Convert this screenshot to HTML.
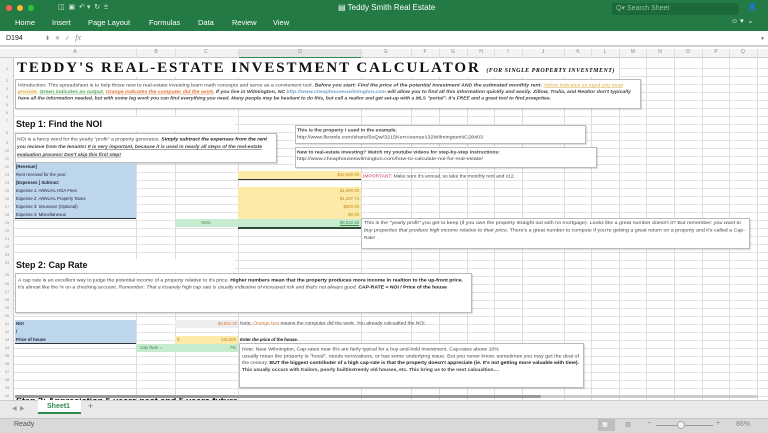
<!DOCTYPE html>
<html><head><meta charset="utf-8"><style>
*{margin:0;padding:0;box-sizing:border-box}
body{width:768px;height:433px;overflow:hidden;position:relative;background:#fff;font-family:"Liberation Sans",sans-serif}
.a{position:absolute}
.t{position:absolute;white-space:nowrap;font-size:4.3px;line-height:8px;color:#333}
.box{position:absolute;background:#fff;border:1px solid #bbb;box-shadow:1px 1px 1px rgba(0,0,0,.15)}
.hl{position:absolute;font-size:5px;color:#888;top:49px;width:20px;text-align:center}
svg text{font-family:"Liberation Sans",sans-serif;font-size:4.6px;fill:#444}
</style></head><body>
<div class="a" style="left:0;top:0;width:768px;height:31px;background:#237a45"></div>
<div class="a" style="left:6px;top:5px;width:6px;height:6px;border-radius:3px;background:#fc5f57"></div>
<div class="a" style="left:17px;top:5px;width:6px;height:6px;border-radius:3px;background:#fdbc2e"></div>
<div class="a" style="left:28px;top:5px;width:6px;height:6px;border-radius:3px;background:#29c840"></div>
<div class="t" style="left:58px;top:4px;font-size:7px;color:#d8eadf">◫ &nbsp;▣ &nbsp;↶ ▾ &nbsp;↻ &nbsp;⩧</div>
<div class="t" style="left:338px;top:4px;font-size:8px;color:#fff">▤ Teddy Smith Real Estate</div>
<div class="a" style="left:612px;top:3px;width:127px;height:12px;background:#1c6a3a;border-radius:2px"></div>
<div class="t" style="left:616px;top:5px;font-size:7px;color:#8fc2a2">Q▾ Search Sheet</div>
<div class="t" style="left:748px;top:4px;font-size:7px;color:#fff">👤</div>
<div class="t" style="left:731px;top:18px;font-size:7px;color:#fff">☺ ▾ &nbsp;⌄</div>
<div class="t" style="left:15px;top:19px;font-size:7.5px;color:#fff">Home</div>
<div class="t" style="left:52px;top:19px;font-size:7.5px;color:#fff">Insert</div>
<div class="t" style="left:88px;top:19px;font-size:7.5px;color:#fff">Page Layout</div>
<div class="t" style="left:149px;top:19px;font-size:7.5px;color:#fff">Formulas</div>
<div class="t" style="left:198px;top:19px;font-size:7.5px;color:#fff">Data</div>
<div class="t" style="left:232px;top:19px;font-size:7.5px;color:#fff">Review</div>
<div class="t" style="left:273px;top:19px;font-size:7.5px;color:#fff">View</div>
<div class="a" style="left:0;top:31px;width:768px;height:16px;background:#fff;border-bottom:2px solid #d0d0d0"></div>
<div class="t" style="left:6px;top:35px;font-size:7px;color:#222">D194</div>
<div class="t" style="left:45px;top:34px;font-size:6px;color:#888">⬍ &nbsp;&nbsp;✕ &nbsp;&nbsp;✓ &nbsp;&nbsp;<i style="font-family:'Liberation Serif';font-size:8px">fx</i></div>
<div class="t" style="left:760px;top:35px;font-size:5px;color:#777">▼</div>
<div class="a" style="left:0;top:49px;width:768px;height:9px;background:#f3f3f3;border-bottom:1px solid #ccc"></div>
<div class="a" style="left:238px;top:49px;width:123px;height:9px;background:#e4e4e4;border-bottom:1px solid #2f8a4f"></div>
<div class="a" style="left:0;top:58px;width:14px;height:342px;background:#f3f3f3;border-right:1px solid #ccc"></div>
<div class="a" style="left:14px;top:58px;width:754px;height:342px;background-image:repeating-linear-gradient(to bottom,transparent 0,transparent 7px,#e2e2e2 7px,#e2e2e2 8px);background-position:0 3px"></div>
<svg class="a" style="left:0;top:49px" width="768" height="351"><g stroke="#ddd" stroke-width="1">
<line x1="136.5" y1="0" x2="136.5" y2="351"/><line x1="175.5" y1="0" x2="175.5" y2="351"/><line x1="238.5" y1="0" x2="238.5" y2="351"/><line x1="361.5" y1="0" x2="361.5" y2="351"/><line x1="411.5" y1="0" x2="411.5" y2="351"/><line x1="439.5" y1="0" x2="439.5" y2="351"/><line x1="467.5" y1="0" x2="467.5" y2="351"/><line x1="494.5" y1="0" x2="494.5" y2="351"/><line x1="522.5" y1="0" x2="522.5" y2="351"/><line x1="564.5" y1="0" x2="564.5" y2="351"/><line x1="591.5" y1="0" x2="591.5" y2="351"/><line x1="619.5" y1="0" x2="619.5" y2="351"/><line x1="646.5" y1="0" x2="646.5" y2="351"/><line x1="674.5" y1="0" x2="674.5" y2="351"/><line x1="702.5" y1="0" x2="702.5" y2="351"/><line x1="729.5" y1="0" x2="729.5" y2="351"/><line x1="757.5" y1="0" x2="757.5" y2="351"/></g></svg>
<div class="hl" style="left:65px">A</div><div class="hl" style="left:146px">B</div><div class="hl" style="left:196px">C</div><div class="hl" style="left:290px">D</div><div class="hl" style="left:376px">E</div><div class="hl" style="left:415px">F</div><div class="hl" style="left:443px">G</div><div class="hl" style="left:471px">H</div><div class="hl" style="left:498px">I</div><div class="hl" style="left:533px">J</div><div class="hl" style="left:568px">K</div><div class="hl" style="left:595px">L</div><div class="hl" style="left:623px">M</div><div class="hl" style="left:650px">N</div><div class="hl" style="left:678px">O</div><div class="hl" style="left:706px">P</div><div class="hl" style="left:733px">Q</div>
<div class="a" style="left:0;top:58px;width:14px;font-size:4px;color:#999;text-align:center;line-height:8px">
<div style="height:19px;line-height:22px">1</div><div>2</div><div>3</div><div>4</div><div>5</div><div>6</div><div>7</div><div style="height:14px;line-height:16px">8</div><div>9</div><div>10</div><div>11</div><div>12</div><div>13</div><div>14</div><div>15</div><div>16</div><div>17</div><div>18</div><div>19</div><div>20</div><div>21</div><div>22</div><div>23</div><div>24</div><div style="height:13px;line-height:16px">25</div><div>26</div><div>27</div><div>28</div><div>29</div><div>30</div><div>31</div><div>32</div><div>33</div><div>34</div><div>35</div><div>36</div><div>37</div><div>38</div><div>39</div><div>40</div><div>41</div></div>
<div class="a" style="left:15px;top:58px;width:604px;height:19px;background:#fff"></div>
<div class="t" style="left:17px;top:61px;font-family:'Liberation Serif',serif;font-weight:bold;font-size:15px;line-height:15px;color:#111;letter-spacing:1.9px">TEDDY'S REAL-ESTATE INVESTMENT CALCULATOR <span style="font-size:6px;font-style:italic;letter-spacing:.5px">(FOR SINGLE PROPERTY INVESTMENT)</span></div>
<div class="box" style="left:15px;top:79px;width:626px;height:30px"></div>
<div class="a" style="left:15px;top:117px;width:220px;height:14px;background:#fff"></div>
<div class="t" style="left:16px;top:119px;font-size:9px;line-height:10px;font-weight:bold;color:#111">Step 1: Find the NOI</div>
<div class="box" style="left:15px;top:133px;width:262px;height:30px"></div>
<div class="box" style="left:295px;top:125px;width:291px;height:19px"></div>
<div class="box" style="left:295px;top:147px;width:302px;height:21px"></div>
<div class="a" style="left:15px;top:163px;width:121px;height:56px;background:#bed6ec;border-bottom:1px solid #333"></div>
<div class="t" style="left:16px;top:163px;font-size:4.3px;color:#223">
<b>[Revenue]</b><br>Rent received for the <i>year</i>:<br><b>[Expenses ] Subtract</b><br>Expense 1: ANNUAL HOA Fees<br>Expense 2: ANNUAL Property Taxes<br>Expense 3: Insurance (Optional)<br>Expense 4: Miscellaneous</div>
<div class="a" style="left:238px;top:171px;width:123px;height:9px;background:#fde9a8;border-bottom:1px solid #333"></div>
<div class="a" style="left:238px;top:187px;width:123px;height:32px;background:#fde9a8"></div>
<div class="t" style="left:238px;top:171px;width:121px;text-align:right;color:#c08a20">$12,600.00</div>
<div class="t" style="left:238px;top:187px;width:121px;text-align:right;color:#c08a20">$1,980.00<br>$1,287.74<br>$500.00<br>$0.00</div>
<div class="a" style="left:175px;top:219px;width:186px;height:8px;background:#c7ebcf"></div>
<div class="a" style="left:238px;top:227px;width:123px;height:2px;background:#2c4a35"></div>
<div class="t" style="left:175px;top:219px;width:63px;text-align:center;color:#3a8a4a">NOI=</div>
<div class="t" style="left:238px;top:219px;width:121px;text-align:right;color:#3a8a4a"><u>$8,832.26</u></div>
<div class="box" style="left:361px;top:218px;width:389px;height:31px"></div>
<div class="a" style="left:15px;top:259px;width:220px;height:13px;background:#fff"></div>
<div class="t" style="left:16px;top:260px;font-size:9px;line-height:10px;font-weight:bold;color:#111">Step 2: Cap Rate</div>
<div class="box" style="left:15px;top:273px;width:457px;height:40px"></div>
<div class="a" style="left:15px;top:320px;width:121px;height:24px;background:#bed6ec;border-bottom:1px solid #333"></div>
<div class="t" style="left:16px;top:320px;color:#223;font-weight:bold">NOI<br>/<br>Price of house</div>
<div class="a" style="left:175px;top:320px;width:63px;height:8px;background:#eee"></div>
<div class="t" style="left:175px;top:320px;width:62px;text-align:right;color:#e0743a">$8,832.26</div>
<div class="a" style="left:175px;top:336px;width:63px;height:8px;background:#fde9a8"></div>
<div class="t" style="left:177px;top:336px;width:59px;color:#c08a20">$<span style="float:right">118,000</span></div>
<div class="t" style="left:240px;top:336px;color:#222"><b><i>Enter the price of the house.</i></b></div>
<div class="a" style="left:136px;top:344px;width:102px;height:8px;background:#c7ebcf"></div>
<div class="t" style="left:140px;top:344px;width:96px;color:#3a8a4a">Cap Rate =<span style="float:right">7%</span></div>
<div class="box" style="left:239px;top:343px;width:345px;height:45px"></div>

<svg class="a" style="left:0;top:0" width="768" height="433">
<text x="18" y="86.3" textLength="605" lengthAdjust="spacingAndGlyphs">Introduction: This spreadsheet is to help those new to real-estate investing learn math concepts and serve as a convienient tool. <tspan font-weight="bold" font-style="italic">Before you start: Find the price of the potential investment AND the estimated monthly rent. </tspan><tspan fill="#d9a93a" text-decoration="underline">Yellow indicates an input you must</tspan></text>
<text x="18" y="92.8" textLength="613" lengthAdjust="spacingAndGlyphs" font-weight="bold" font-style="italic" fill="#222"><tspan fill="#d9a93a" text-decoration="underline">provide.</tspan> <tspan fill="#5aa45a" text-decoration="underline">Green indicates an output.</tspan> <tspan fill="#e0743a" text-decoration="underline">Orange indicates the computer did the work.</tspan> If you live in Wilmington, NC <tspan fill="#6fa0c8">http://www.cheaphouseswilmington.com</tspan> will allow you to find all this information quickly and easily. Zillow, Trulia, and Realtor don't typically</text>
<text x="18" y="99.3" textLength="533" lengthAdjust="spacingAndGlyphs" font-weight="bold" font-style="italic" fill="#222">have all the information needed, but with some leg work you can find everything you need. Many people may be hesitant to do this, but call a realtor and get set-up with a MLS "portal". It's FREE and a great tool to find proeprties.</text>

<text x="17" y="140.5" textLength="250" lengthAdjust="spacingAndGlyphs">NOI is a fancy word for the yearly "profit" a property generates. <tspan font-weight="bold" font-style="italic" fill="#222">Simply subtract the expenses from the rent</tspan></text>
<text x="17" y="148.2" textLength="245" lengthAdjust="spacingAndGlyphs" font-weight="bold" font-style="italic" fill="#222">you recieve from the tenants!  <tspan text-decoration="underline">It is very important, because it is used in nearly all steps of the real-estate</tspan></text>
<text x="17" y="155.8" textLength="104" lengthAdjust="spacingAndGlyphs" font-weight="bold" font-style="italic" fill="#222" text-decoration="underline">evaluation process! Don't skip this first step!</text>

<text x="297" y="131.7" textLength="100" lengthAdjust="spacingAndGlyphs" font-weight="bold" fill="#222">This is the property I used in the example.</text>
<text x="297" y="138.4" textLength="186" lengthAdjust="spacingAndGlyphs">http://www.flexmls.com/share/5oQw/3215KerrAvenue132WilmingtonNC28403</text>
<text x="297" y="153.7" textLength="203" lengthAdjust="spacingAndGlyphs" font-weight="bold" fill="#222">New to real-estate investing? Watch my youtube videos for step-by-step instructions:</text>
<text x="297" y="159.9" textLength="186" lengthAdjust="spacingAndGlyphs">http://www.cheaphouseswilmington.com/how-to-calculate-noi-for-real-estate/</text>

<text x="363" y="177.5" textLength="152" lengthAdjust="spacingAndGlyphs"><tspan fill="#d0365a">IMPORTANT:</tspan> Make sure it's annual, so take the monthly rent and x12.</text>

<text x="364" y="224" textLength="377" lengthAdjust="spacingAndGlyphs">This is the "yearly profit" you get to keep (if you own the property straight out with no mortgage). Looks like a great number doesn't it? But remember: <tspan font-style="italic">you want to</tspan></text>
<text x="364" y="231.4" textLength="381" lengthAdjust="spacingAndGlyphs"><tspan font-style="italic">buy properties that produce high income relative to their price.</tspan>  There's a great number to compute if you're getting a great return on a property and it's called a Cap-</text>
<text x="364" y="238.8">Rate!</text>

<text x="18" y="281.7" textLength="445" lengthAdjust="spacingAndGlyphs">A cap rate is an excellent way to judge the potential income of a property  relative to it's price. <tspan font-weight="bold" fill="#222">Higher numbers mean that the property produces more income in realtion to the up-front price.</tspan></text>
<text x="18" y="288.4" textLength="429" lengthAdjust="spacingAndGlyphs">It's almost like the % on a checking account. <tspan font-style="italic">Remember: That a insanely high cap rate is usually indicative of increased risk and that's not always good.</tspan> <tspan font-weight="bold" fill="#222">CAP-RATE = NOI / Price of the house</tspan></text>

<text x="240" y="324.4" textLength="186" lengthAdjust="spacingAndGlyphs">Note: <tspan fill="#e0743a">Orange text</tspan> means the computer did the work. You already calcualted the NOI.</text>

<text x="242" y="350.7" textLength="257" lengthAdjust="spacingAndGlyphs">Note: Near Wilmington, Cap-rates near 8% are fairly typical for a buy-and-hold investment. Cap-rates above 10%</text>
<text x="242" y="357.4" textLength="337" lengthAdjust="spacingAndGlyphs">usually mean the property is "hood", needs renovations, or has some underlying issue. But you never know, sometimes you may get the deal of</text>
<text x="242" y="364.1" textLength="337" lengthAdjust="spacingAndGlyphs">the century. <tspan font-weight="bold" fill="#222">BUT the biggest contributer of a high cap-rate is that the property doesn't appreciate (ie. It's not getting more valuable with time).</tspan></text>
<text x="242" y="370.8" textLength="257" lengthAdjust="spacingAndGlyphs" font-weight="bold" fill="#222">This usually occurs with trailors, poorly built/extremly old houses, etc. This bring us to the next calcualtion....</text>
</svg>

<div class="t" style="left:16px;top:396px;font-size:9px;line-height:10px;font-weight:bold;color:#111;height:6px;overflow:hidden">Step 3: Appreciation 5 years past and 5 years future</div>
<div class="a" style="left:15px;top:395px;width:743px;height:3px;background:#ccc"></div>
<div class="a" style="left:15px;top:395px;width:526px;height:3px;background:#9a9a9a;border-radius:2px"></div>
<div class="a" style="left:0;top:400px;width:768px;height:18px;background:#e9e9e9;border-top:1px solid #ccc"></div>
<div class="t" style="left:12px;top:405px;font-size:6px;color:#999">◀ &nbsp;▶</div>
<div class="a" style="left:38px;top:400px;width:43px;height:14px;background:#fff;border-bottom:2px solid #2f8a4f"></div>
<div class="t" style="left:47px;top:403px;font-size:7px;color:#2f8a4f;font-weight:bold">Sheet1</div>
<div class="t" style="left:88px;top:402px;font-size:9px;color:#777">+</div>
<div class="a" style="left:0;top:418px;width:768px;height:15px;background:#d9d9d9;border-top:1px solid #c6c6c6"></div>
<div class="t" style="left:14px;top:421px;font-size:7px;color:#555">Ready</div>
<div class="a" style="left:598px;top:419px;width:17px;height:12px;background:#bdbdbd"></div>
<div class="t" style="left:602px;top:421px;font-size:6px;color:#fff">▦</div>
<div class="t" style="left:625px;top:421px;font-size:6px;color:#888">▥</div>
<div class="t" style="left:647px;top:420px;font-size:7px;color:#888">−</div>
<div class="a" style="left:656px;top:425px;width:57px;height:1px;background:#999"></div>
<div class="a" style="left:677px;top:421px;width:8px;height:8px;border-radius:4px;background:#f4f4f4;border:1px solid #aaa"></div>
<div class="t" style="left:716px;top:420px;font-size:7px;color:#888">+</div>
<div class="t" style="left:736px;top:421px;font-size:7px;color:#888">86%</div>
</body></html>
